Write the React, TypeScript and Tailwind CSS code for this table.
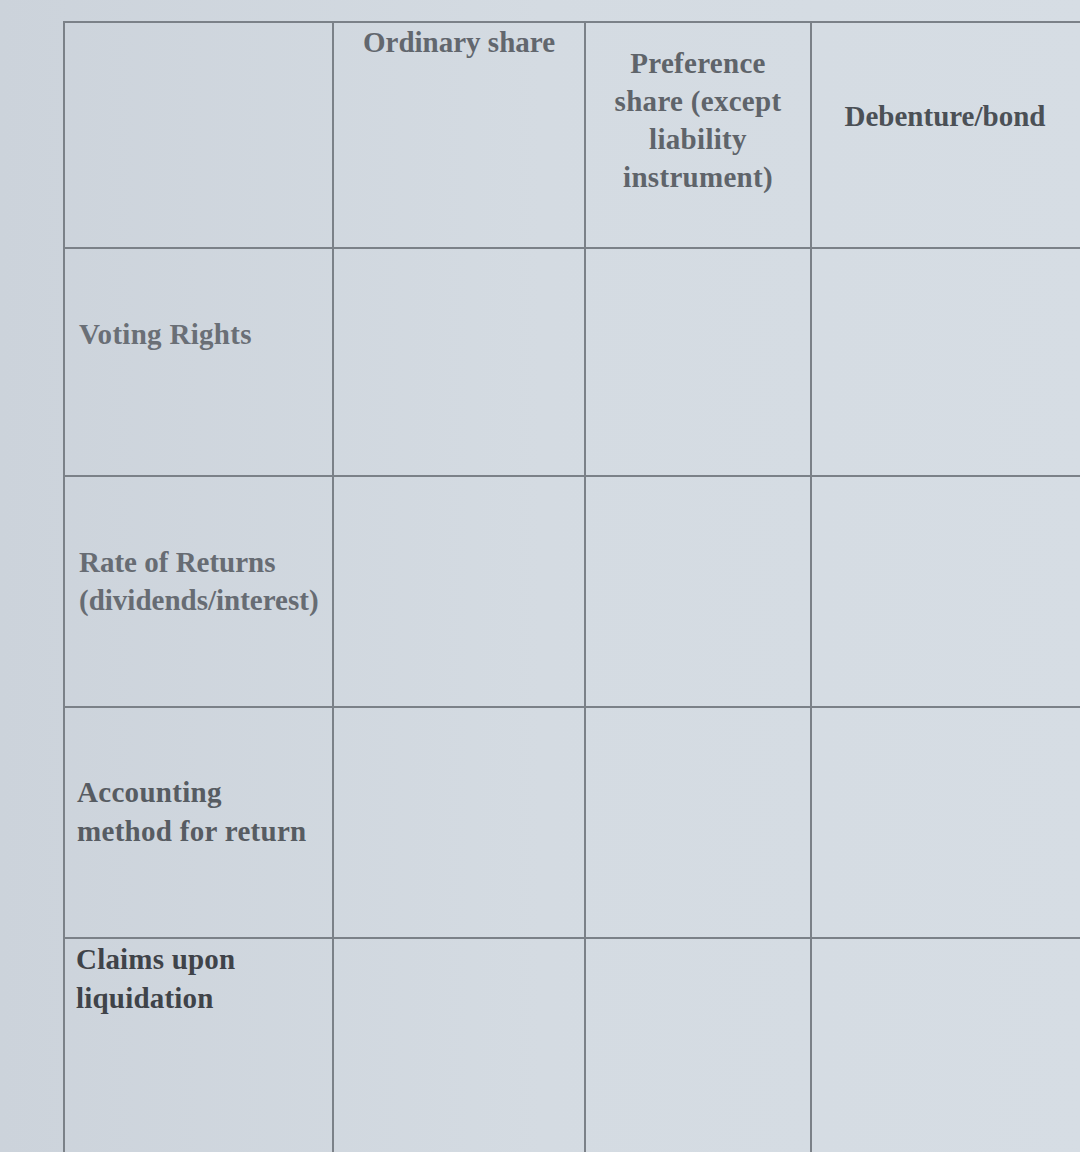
import React from "react";

const serif = { fontFamily: '"Liberation Serif", "Times New Roman", serif' };

export default function App() {
  const cell = "border-r-2 border-b-2 border-[#7b8188]";
  const last = "border-b-2 border-[#7b8188]";
  return (
    <div
      className="w-[1080px] h-[1152px] overflow-hidden bg-gradient-to-r from-[#ccd3db] via-[#d4dbe2] to-[#d6dde4]"
      style={serif}
    >
      <div className="ml-[63px] mt-[21px] border-l-2 border-t-2 border-[#7b8188] grid grid-cols-[269px_252px_226px_1fr] text-[29px] leading-[38px] font-bold">
        {/* header row */}
        <div className={`${cell} h-[226px]`} />
        <div className={`${cell} h-[226px] text-center text-[#62676e]`}>Ordinary share</div>
        <div className={`${cell} h-[226px] pt-[21px] text-center text-[#5f646a] tracking-[0.3px]`}>
          Preference
          <br />
          share (except
          <br />
          liability
          <br />
          instrument)
        </div>
        <div className={`${last} h-[226px] pt-[74px] pr-[2px] text-center text-[#4b5056]`}>Debenture/bond</div>

        {/* Voting Rights */}
        <div className={`${cell} h-[228px] pl-[14px] pt-[66px] text-[#6a6f76] tracking-[0.3px]`}>Voting Rights</div>
        <div className={`${cell} h-[228px]`} />
        <div className={`${cell} h-[228px]`} />
        <div className={`${last} h-[228px]`} />

        {/* Rate of returns */}
        <div className={`${cell} h-[231px] pl-[14px] pt-[66px] text-[#676c73]`}>
          Rate of Returns
          <br />
          (dividends/interest)
        </div>
        <div className={`${cell} h-[231px]`} />
        <div className={`${cell} h-[231px]`} />
        <div className={`${last} h-[231px]`} />

        {/* Accounting */}
        <div className={`${cell} h-[231px] pl-[12px] pt-[65px] text-[#575c62] leading-[39px] tracking-[0.3px]`}>
          Accounting
          <br />
          method for return
        </div>
        <div className={`${cell} h-[231px]`} />
        <div className={`${cell} h-[231px]`} />
        <div className={`${last} h-[231px]`} />

        {/* Claims */}
        <div className={`${cell} h-[260px] pl-[11px] pt-[1px] text-[#3f4349] leading-[39px] tracking-[0.2px]`}>
          Claims upon
          <br />
          liquidation
        </div>
        <div className={`${cell} h-[260px]`} />
        <div className={`${cell} h-[260px]`} />
        <div className={`${last} h-[260px]`} />
      </div>
    </div>
  );
}
